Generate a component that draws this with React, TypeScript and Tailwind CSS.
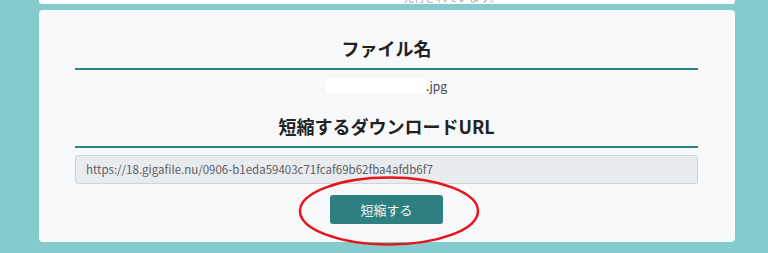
import React from 'react';

export default function App() {
  return (
    <div
      className="h-[253px] w-[768px] overflow-hidden bg-[#84cbce] pl-[39px] pr-[33px]"
      style={{ fontFamily: '"Noto Sans CJK JP", "Noto Sans", sans-serif' }}
    >
      {/* bottom edge of the previous card */}
      <div className="-mt-[20px] h-[24px] rounded-b-[3px] bg-white pl-[364px] text-[11px] leading-[24px] text-[#aaa]">
        <span className="relative top-[5px]">発行されています。</span>
      </div>

      <div className="relative mt-[6px] h-[232px] rounded-[4px] bg-[#f8f9fa] pl-[36px] pr-[37px] pt-[24px]">
        <h2 className="text-center text-[18px] font-bold leading-[28px] text-[#222]">ファイル名</h2>
        <div className="mt-[6px] h-[2px] bg-[#2e8284]" />
        <div className="mt-[7px] flex items-center justify-center text-[12px] leading-[18px] text-[#444]">
          <span className="inline-block h-[14px] w-[100px] bg-white" />
          <span>.jpg</span>
        </div>

        <h2 className="mt-[17px] text-center text-[18px] font-bold leading-[28px] text-[#222]">
          短縮するダウンロードURL
        </h2>
        <div className="mt-[6px] h-[2px] bg-[#2e8284]" />
        <div className="mt-[7px] flex h-[29px] items-center rounded-[3px] border border-[#ced4da] bg-[#e9ecef] px-[10px] text-[11.5px] text-[#5a6066]">
          https://18.gigafile.nu/0906-b1eda59403c71fcaf69b62fba4afdb6f7
        </div>

        <div className="mt-[11px] flex justify-center">
          <button className="h-[29px] w-[113px] rounded-[3px] bg-[#2e7f80] text-[13px] text-[#f1f5f5]">
            短縮する
          </button>
        </div>

        <svg
          className="pointer-events-none absolute left-[258px] top-[165px]"
          width="184"
          height="72"
          viewBox="0 0 184 72"
        >
          <ellipse cx="92" cy="36" rx="89" ry="33.5" fill="none" stroke="#e8141c" strokeWidth="2.5" />
        </svg>
      </div>
    </div>
  );
}
